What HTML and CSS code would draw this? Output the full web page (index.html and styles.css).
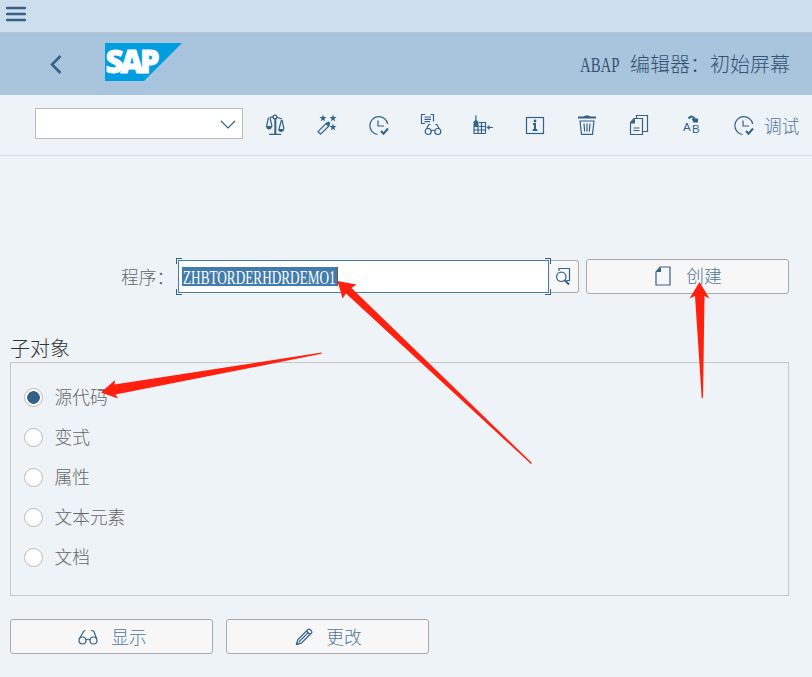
FILE: index.html
```html
<!DOCTYPE html>
<html lang="zh-CN">
<head>
<meta charset="utf-8">
<title>ABAP 编辑器：初始屏幕</title>
<link rel="stylesheet" href="styles.css">
</head>
<body>
<div class="window">
  <div class="menubar">
    <svg class="burger" viewBox="0 0 20 16"><path d="M1 2H19M1 8H19M1 14H19"/></svg>
  </div>
  <header class="header">
    <svg class="back" viewBox="0 0 14 20"><path d="M11.5 2L3 10.5L11.5 19"/></svg>
    <svg class="logo" viewBox="0 0 77 38"><path d="M0 0H77L39 38H0Z"/><text x="0.5" y="30" textLength="54" lengthAdjust="spacing">SAP</text></svg>
    <h1 class="title"><span class="title-latin"><span class="latin">ABAP</span></span><span>编辑器：初始屏幕</span></h1>
  </header>
  <nav class="toolbar">
    <div class="combo"><svg viewBox="0 0 16 10"><path d="M1 1L8 8L15 1"/></svg></div>
    <div class="tools">
      <svg class="icon" viewBox="0 0 24 24"><path d="M6 21.3H18M7 4.3L11 3.7M14 4.3L19 6M5.5 4.5L3.5 13.500M7 4.500L9 13.500M18.500 7L16 16M19 7L21 16"/><circle cx="12" cy="4" r="1.9"/><path class="heavy" d="M12.300 5V21"/><path class="fill" d="M3 13H9.300Q8.500 16.500 6 16.500Q3.500 16.500 3 13ZM15 16H21.300Q20.500 19 18.100 19Q15.500 19 15 16Z"/></svg>
      <svg class="icon" viewBox="0 0 24 24"><path d="M3 18.7L11.5 10.2L14.2 12.7L5.5 21.2Z"/><path class="fill" d="M10.500 11L13.500 8.300L15.500 10.400L13 13.300ZM8 1.500L8.900 4.100H11.500L9.400 5.700L10.200 8.400L8 6.800L5.800 8.400L6.600 5.700L4.500 4.100H7.100ZM18 1.500L18.900 4.100H21.500L19.400 5.700L20.200 8.400L18 6.800L15.800 8.400L16.600 5.700L14.500 4.100H17.100ZM18 10.500L18.900 13.100H21.500L19.400 14.700L20.200 17.400L18 15.800L15.800 17.400L16.600 14.700L14.500 13.100H17.100Z"/></svg>
      <svg class="icon" viewBox="0 0 24 24"><path d="M20.7 11A9 9 0 1 0 10.5 21.5M11 7.5V13H17"/><path class="heavy" d="M14 18L16.5 20.7L21 15.5"/></svg>
      <svg class="icon" viewBox="0 0 24 24"><path d="M6 1.5H2.500V10.500H6M11.500 1.500H14.500V8.500M5.500 4H12M5.500 6.300H12M5.500 8.600H11M7.500 16L9.700 11.500H11.500M20.300 16L18 11.500H16.300M12 18Q14 16.500 16 18"/><circle cx="9.200" cy="18.500" r="3"/><circle cx="18.800" cy="18.500" r="3"/></svg>
      <svg class="icon" viewBox="0 0 24 24"><path class="fill" d="M4.300 2.200H5.500V7L7.500 9V14H2.500V9L4.300 7Z"/><path d="M3 14V20.500H14.500M3 17H14.500M7 14V20.500M10.500 14V20.500M8 9.500H14.500V20.500M8 13.500H14.500M10.500 9.500V13.500M16 14.500H22"/><path class="fill" d="M18.500 12V17L15.500 14.500Z"/></svg>
      <svg class="icon" viewBox="0 0 24 24"><rect x="3.500" y="4.500" width="17" height="16"/><path class="heavy" d="M12 10.800V16.500M10 11H13M9.700 17H14.300"/><circle class="fill" cx="12" cy="8" r="1.400"/></svg>
      <svg class="icon" viewBox="0 0 24 24"><path class="heavy" d="M3 4.500H21"/><path class="fill" d="M8 4Q12 .5 16 4Z"/><path d="M4.500 8H19.500M5 8L6.500 21.300H17.500L19 8M9 10.500L9.700 18.500M12 10.500V18.500M15 10.500L14.300 18.500"/></svg>
      <svg class="icon" viewBox="0 0 24 24"><path d="M7 5.500H15.500V21.500H3.500V9.500ZM9.500 5V2.500H20.500V18.500H16M6.500 15H12.500M6.500 17.500H12.500"/><path class="fill" d="M8 5.500V10.500H3Z"/></svg>
      <svg class="icon" viewBox="0 0 24 24"><text x="4" y="18">A</text><text x="13" y="20.300">B</text><path class="heavy" d="M9.500 5.500Q13 1.500 16 6"/><path class="fill" d="M12.500 5.500H19V9.500H14.500Z"/></svg>
      <div class="debug">
        <svg class="icon" viewBox="0 0 24 24"><path d="M20.7 11A9 9 0 1 0 10.5 21.5M11 7.5V13H17"/><path class="heavy" d="M14 18L16.5 20.7L21 15.5"/></svg>
        <span>调试</span>
      </div>
    </div>
  </nav>
  <main class="content">
    <div class="program-row">
      <label class="program-label">程序：</label>
      <div class="field"><span class="selected"><span class="latin">ZHBTORDERHDRDEMO1</span></span><i class="corner tl"></i><i class="corner bl"></i><i class="corner tr"></i><i class="corner br"></i></div>
      <div class="help"><svg viewBox="0 0 16 20"><path d="M4 5V2.5H14.5V14.5H11.5"/><circle cx="6.3" cy="10.8" r="4.7"/><path class="heavy" d="M9.5 14L14 18.5"/></svg></div>
      <div class="button create"><svg class="page" viewBox="0 0 16 20"><path d="M5 1H15V19H1V6Z"/><path class="fill" d="M6 1V6H1Z"/></svg><span>创建</span></div>
    </div>
    <h2 class="group-title">子对象</h2>
    <section class="group">
      <div class="option"><i class="radio checked"></i><span>源代码</span></div>
      <div class="option"><i class="radio"></i><span>变式</span></div>
      <div class="option"><i class="radio"></i><span>属性</span></div>
      <div class="option"><i class="radio"></i><span>文本元素</span></div>
      <div class="option"><i class="radio"></i><span>文档</span></div>
    </section>
    <div class="actions">
      <div class="button"><svg class="glasses" viewBox="0 0 20 16"><circle cx="4.500" cy="11.500" r="3.500"/><circle cx="15.500" cy="11.500" r="3.500"/><path d="M1.300 10L5.500 2.500Q6.300 1.500 7.500 1.500M18.700 10L16 2.500Q15.300 1.500 13 1.500M8 11Q10 9.500 12 11"/></svg><span>显示</span></div>
      <div class="button"><svg class="pencil" viewBox="0 0 18 18"><path d="M1.500 16.500L2.700 11.700L13 1.500Q14 .6 15 1.500L16.500 3Q17.300 4 16.500 5L6.300 15.200ZM3.800 14L13 4.800M11.500 3L15 6.500"/><path class="fill" d="M1 17L2 13.500L4.500 16Z"/></svg><span>更改</span></div>
    </div>
  </main>
  <svg class="annotations" viewBox="0 0 812 677">
    <path d="M101 392.500L115 380L114.500 384.500L321.500 352.500V353.800L115.500 394.500L118 398.500Z"/>
    <path d="M337.500 281L356.500 284.500L351.500 288L532 463L531 464L346 293.500L342.500 298.500Z"/>
    <path d="M699.500 282L709.500 298.500L704.500 296L703 398H701.700L695 296L689.500 298.500Z"/>
  </svg>
</div>
</body>
</html>
```
FILE: styles.css
```css
* { box-sizing: border-box; }
body { margin: 0; background: #eef3f8; }
.window {
  position: relative;
  width: 812px;
  height: 677px;
  overflow: hidden;
  font-family: "Noto Sans CJK SC", sans-serif;
  font-weight: 300;
  font-size: 17.7px;
  line-height: 24px;
  color: #666;
}
svg { display: block; flex: none; fill: none; stroke: #346187; stroke-width: 1.2; }
svg .fill { fill: #346187; stroke: none; }
svg .heavy { stroke-width: 2; }
.menubar { height: 33px; padding: 6px; background: #cddeec; border-bottom: 1px solid #bcc5cc; }
.burger { width: 20px; height: 16px; stroke-width: 2.3; stroke-linecap: round; }
.header { height: 62px; display: flex; align-items: center; padding: 0 22px 0 49px; background: #a9c4dd; }
.back { width: 14px; height: 20px; stroke-width: 2.5; }
.logo { width: 77px; height: 38px; margin: -4px 0 0 41.5px; fill: #009de0; stroke: none; }
.logo text { fill: #fff; stroke: #fff; stroke-width: .8; font: 800 31px "Open Sans", sans-serif; }
.title { display: flex; margin: 0 0 0 auto; font-size: 20px; font-weight: 300; line-height: 28px; color: #335371; }
.title-latin { width: 50px; }
.latin { display: inline-block; transform-origin: 0 50%; font-family: "Liberation Serif", serif; font-weight: 400; white-space: nowrap; }
.title .latin { transform: scaleX(.74); }
.toolbar { height: 61px; display: flex; align-items: center; padding-left: 35px; border-bottom: 1px solid #d0dfeb; }
.combo { width: 208px; height: 31px; margin-top: -3px; display: flex; align-items: center; justify-content: flex-end; padding: 3px 6px 0 0; border: 1px solid #bbb; background: #fff; }
.combo svg { width: 16px; height: 10px; }
.tools { display: flex; align-items: center; gap: 28px; margin-left: 20px; }
.icon { width: 24px; height: 24px; }
.icon text { fill: #346187; stroke: none; font: 11.5px "Liberation Sans", sans-serif; }
.debug { display: flex; gap: 8px; margin-left: 1px; color: #517596; }
.content { padding: 101px 23px 0 10px; }
.program-row { display: flex; align-items: center; height: 38px; }
.program-label { width: 58px; margin-left: 111px; white-space: nowrap; }
.field { position: relative; width: 371px; height: 33px; margin: 0 1px 0 -1px; padding: 3px; border: 1px solid #427cac; background: #fff; display: flex; align-items: center; }
.selected { width: 156px; height: 19px; line-height: 19px; background: #427cac; color: #fff; border-right: 1px solid #6b553e; }
.selected .latin { width: 152px; font-size: 18px; transform: translateX(1px) scaleX(.735); }
.corner { position: absolute; width: 6px; height: 6px; border: 0 solid #346187; }
.tl { left: -3px; top: -3px; border-width: 1px 0 0 1px; }
.bl { left: -3px; bottom: -3px; border-width: 0 0 1px 1px; }
.tr { right: -3px; top: -3px; border-width: 1px 1px 0 0; }
.br { right: -3px; bottom: -3px; border-width: 0 1px 1px 0; }
.help { width: 29px; height: 33px; display: flex; align-items: center; justify-content: center; border: 1px solid #aaa; border-left: 0; border-radius: 0 3px 3px 0; background: #f7f7f7; }
.help svg { width: 16px; height: 20px; margin-right: 2px; }
.button { width: 203px; height: 35px; display: flex; align-items: center; justify-content: center; border: 1px solid #aaa; border-radius: 3px; background: #f7f7f7; color: #517596; }
.button span { margin-top: -2px; }
.create { margin-left: 7px; gap: 15px; padding-left: 2px; }
.page { width: 16px; height: 20px; }
.group-title { margin: 41px 0 2px; font-size: 20px; line-height: 24px; font-weight: 300; color: #333; }
.group { height: 234px; padding: 14px 13px; border: 1px solid #c4c8cb; }
.option { display: flex; align-items: center; gap: 11.5px; height: 40px; }
.option span { margin-top: -3px; }
.radio { width: 19px; height: 19px; border: 1px solid #bbb; border-radius: 50%; background: #fff; }
.checked { background: radial-gradient(circle, #346187 6px, #fff 6.6px); }
.actions { display: flex; gap: 13px; margin-top: 23px; }
.actions .button { gap: 13px; padding-left: 2px; }
.glasses { width: 20px; height: 16px; }
.pencil { width: 18px; height: 18px; }
.annotations { position: absolute; inset: 0; width: 812px; height: 677px; fill: #ff2010; stroke: none; pointer-events: none; }
```
